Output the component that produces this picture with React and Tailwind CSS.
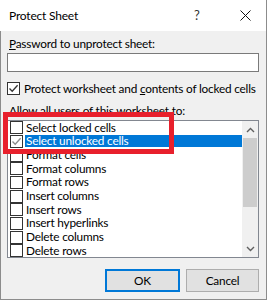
import React from "react";

const Check = ({ color = "#333" }) => (
  <svg width="11" height="11" viewBox="0 0 11 11" className="block">
    <path d="M1.5 5.5 L4.2 8.3 L9.6 2.2" fill="none" stroke={color} strokeWidth="1.3" />
  </svg>
);

const Box = ({ checked, checkColor }) => (
  <div className="w-[13px] h-[13px] shrink-0 border border-[#333] bg-white flex items-center justify-center">
    {checked && <Check color={checkColor} />}
  </div>
);

const items = [
  "Select locked cells",
  "Select unlocked cells",
  "Format cells",
  "Format columns",
  "Format rows",
  "Insert columns",
  "Insert rows",
  "Insert hyperlinks",
  "Delete columns",
  "Delete rows",
];

export default function App() {
  return (
    <div
      className="relative w-[267px] h-[300px] overflow-hidden text-[11.8px] tracking-[-0.2px] text-black border-r border-[#8c8c8c]"
      style={{ fontFamily: 'Lato, "Noto Sans", sans-serif' }}
    >
      <div className="h-[31px] bg-white flex items-center pl-[9px]">
        <span className="flex-1 text-[12px]">Protect Sheet</span>
        <span className="w-[10px] text-[13px] text-[#333] mr-[36px]">?</span>
        <svg width="11" height="11" viewBox="0 0 11 11" className="mr-[15px]">
          <path d="M0.5 0.5 L10.5 10.5 M10.5 0.5 L0.5 10.5" stroke="#111" strokeWidth="1" />
        </svg>
      </div>
      <div className="h-[269px] bg-[#f0f0f0] border-l border-b border-[#8c8c8c] pl-[6px] pr-[7px] pt-[5px] flex flex-col">
        <div className="h-[15px] leading-[15px] pl-[2px] whitespace-nowrap">
          <span className="underline">P</span>assword to unprotect sheet:
        </div>
        <div className="mt-[2px] h-[19px] bg-white border border-[#7a7a7a]" />
        <div className="mt-[10px] flex items-center h-[13px]">
          <Box checked />
          <span className="ml-[4px] leading-[13px] whitespace-nowrap">
            Protect worksheet and <span className="underline">c</span>ontents of locked cells
          </span>
        </div>
        <div className="mt-[8px] h-[15px] leading-[15px] pl-[2px] whitespace-nowrap">Allow all users of this worksheet to:</div>
        <div className="mt-[2px] h-[138px] bg-white border border-[#828790] flex">
          <div className="flex-1 flex flex-col overflow-hidden">
            {items.map((t, i) => (
              <div key={t} className="h-[13.67px] shrink-0 flex items-center">
                <div className="ml-[2px]">
                  <Box checked={i === 1} checkColor="#8a8a8a" />
                </div>
                <div
                  className={
                    "ml-[2px] h-[12px] leading-[12px] pl-[1px] whitespace-nowrap " +
                    (i === 1 ? "flex-1 bg-[#0078d7] text-white" : "")
                  }
                >
                  {t}
                </div>
              </div>
            ))}
          </div>
          <div className="w-[16px] bg-[#f0f0f0] flex flex-col">
            <div className="h-[17px] flex items-center justify-center">
              <svg width="9" height="6" viewBox="0 0 9 6">
                <path d="M1 5 L4.5 1.5 L8 5" fill="none" stroke="#606060" strokeWidth="1.4" />
              </svg>
            </div>
            <div className="mx-[1px] h-[69px] bg-[#cdcdcd]" />
            <div className="flex-1" />
            <div className="h-[17px] flex items-center justify-center">
              <svg width="9" height="6" viewBox="0 0 9 6">
                <path d="M1 1 L4.5 4.5 L8 1" fill="none" stroke="#606060" strokeWidth="1.4" />
              </svg>
            </div>
          </div>
        </div>
        <div className="mt-[11px] flex justify-end gap-[6px]">
          <div className="w-[75px] h-[23px] bg-[#e1e1e1] border-2 border-[#0078d7] flex items-center justify-center">
            OK
          </div>
          <div className="w-[73px] h-[23px] bg-[#e1e1e1] border border-[#adadad] flex items-center justify-center">
            Cancel
          </div>
        </div>
      </div>
      <div className="absolute left-[3px] top-[112px] w-[171px] h-[42px] border-[5px] border-[#e8202c] pointer-events-none" />
    </div>
  );
}
